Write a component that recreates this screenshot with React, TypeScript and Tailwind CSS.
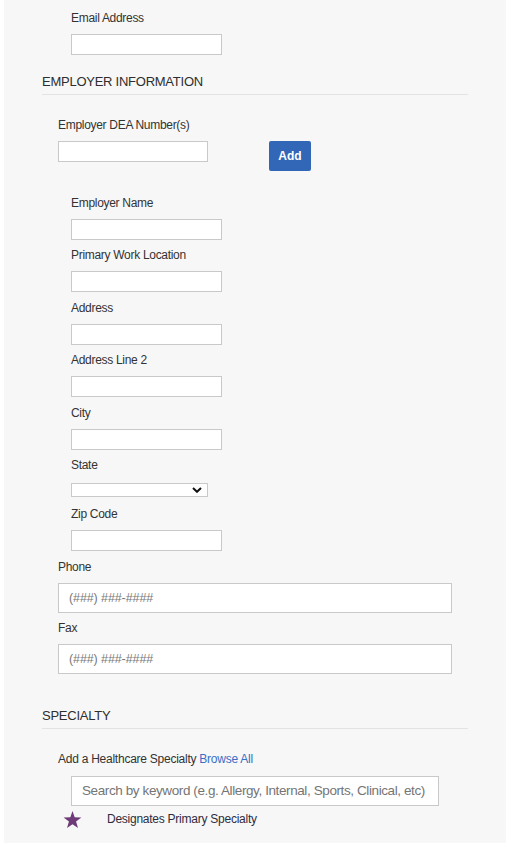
import React from "react";

function Label({ children }: { children: React.ReactNode }) {
  return (
    <div className="h-[17px] leading-[17px] text-[12px] tracking-[-0.3px] text-[#333]">{children}</div>
  );
}

function SmallField({ label }: { label: string }) {
  return (
    <div>
      <Label>{label}</Label>
      <input type="text" className="mt-[7px] block w-[151px] h-[21px] border border-[#c9c9c9] bg-white" />
    </div>
  );
}

function WideField({ label }: { label: string }) {
  return (
    <div>
      <Label>{label}</Label>
      <input
        type="text"
        placeholder="(###) ###-####"
        className="mt-[7px] block w-[394px] h-[30px] border border-[#c9c9c9] bg-white pl-[10px] text-[12.5px] tracking-[-0.1px] placeholder:text-[#777]"
      />
    </div>
  );
}

function Heading({ children, className }: { children: React.ReactNode; className: string }) {
  return (
    <h2
      className={
        "text-[13px] leading-[18px] tracking-[-0.25px] pb-[3px] border-b border-[#e3e3e3] text-[#2e2e2e] " +
        className
      }
    >
      {children}
    </h2>
  );
}

export default function App() {
  return (
    <div className="min-h-screen bg-white font-['Liberation_Sans',Arial,sans-serif]">
      <div className="ml-[4px] w-[502px] min-h-[843px] bg-[#f7f7f7] px-[38px] pt-[10px]">
        <div className="pl-[29px]">
          <SmallField label="Email Address" />
        </div>

        <Heading className="mt-[17.5px]">EMPLOYER INFORMATION</Heading>

        <div className="pl-[16px] mt-[22.5px]">
          <Label>Employer DEA Number(s)</Label>
          <div className="flex items-start mt-[7px]">
            <input type="text" className="block w-[150px] h-[21px] border border-[#c9c9c9] bg-white" />
            <button className="ml-[61px] w-[42px] h-[30px] rounded-[2px] bg-[#3167b6] text-white text-[12px] font-bold">
              Add
            </button>
          </div>
        </div>

        <div className="pl-[29px] mt-[23.5px] flex flex-col gap-[7.5px]">
          <SmallField label="Employer Name" />
          <SmallField label="Primary Work Location" />
          <SmallField label="Address" />
          <SmallField label="Address Line 2" />
          <SmallField label="City" />
          <div>
            <Label>State</Label>
            <div className="relative mt-[8.5px] w-[137px] h-[14px]">
              <select className="block w-[137px] h-[14px] appearance-none border border-[#c9c9c9] bg-white text-[10px]">
                <option></option>
              </select>
              <svg
                className="pointer-events-none absolute right-[6px] top-[4px]"
                width="10"
                height="6"
                viewBox="0 0 10 6"
              >
                <path d="M1 1 L5 4.8 L9 1" fill="none" stroke="#111" strokeWidth="2" />
              </svg>
            </div>
          </div>
          <div className="mt-[2px]">
            <SmallField label="Zip Code" />
          </div>
        </div>

        <div className="pl-[16px] mt-[7.5px] flex flex-col gap-[7px]">
          <WideField label="Phone" />
          <WideField label="Fax" />
        </div>

        <Heading className="mt-[33px]">SPECIALTY</Heading>

        <div className="pl-[16px] mt-[22px]">
          <div className="h-[17px] leading-[17px] text-[12px] tracking-[-0.25px] text-[#333]">
            Add a Healthcare Specialty <a className="text-[#3a6fc6]">Browse All</a>
          </div>
          <input
            type="text"
            placeholder="Search by keyword (e.g. Allergy, Internal, Sports, Clinical, etc)"
            className="ml-[13px] mt-[8px] block w-[368px] h-[30px] border border-[#c9c9c9] bg-white pl-[10px] text-[13.5px] tracking-[-0.4px] placeholder:text-[#757575]"
          />
          <div className="flex items-center h-[17px] mt-[5px]">
            <svg className="ml-[5px]" width="19" height="17" viewBox="0 0 24 22">
              <path
                d="M12 0 L14.8 8.2 L23.5 8.4 L16.6 13.6 L19.1 22 L12 17 L4.9 22 L7.4 13.6 L0.5 8.4 L9.2 8.2 Z"
                fill="#6e3a78"
              />
            </svg>
            <span className="ml-[25px] text-[12px] tracking-[-0.25px] text-[#2f2c40]">
              Designates Primary Specialty
            </span>
          </div>
        </div>
      </div>
    </div>
  );
}
